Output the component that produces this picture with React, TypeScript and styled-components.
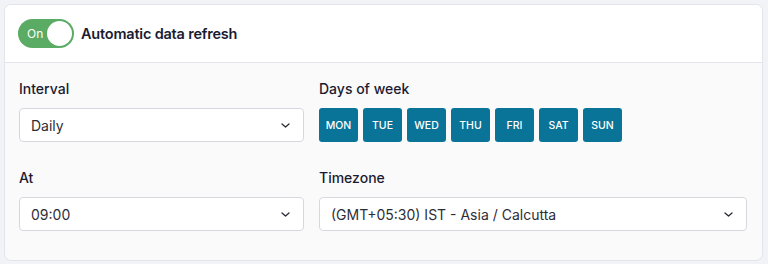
import { FC, useState } from "react";
import styled, { createGlobalStyle } from "styled-components";

const GlobalStyle = createGlobalStyle`
  html, body {
    margin: 0;
    padding: 0;
    background: #f2f3f7;
    font-family: Inter, "Noto Sans", sans-serif;
    color: #1b1b32;
  }
`;

const Page = styled.div`
  padding: 4px 5px 5px 4px;
`;

const Card = styled.section`
  background: #fafafb;
  border: 1px solid #e3e5ec;
  border-radius: 7px;
  overflow: hidden;
`;

const Header = styled.div`
  display: flex;
  align-items: center;
  gap: 7px;
  height: 57px;
  padding: 0 14px 0 13px;
  background: #fff;
  border-bottom: 1px solid #e3e5ec;
`;

const Title = styled.h3`
  margin: 0;
  font-size: 14.5px;
  font-weight: 600;
  letter-spacing: -0.2px;
`;

const Toggle = styled.button<{ $on: boolean }>`
  position: relative;
  width: 56px;
  height: 29px;
  border: none;
  border-radius: 15px;
  padding: 0 0 0 9px;
  background: ${(p) => (p.$on ? "#5aab63" : "#c4c7cf")};
  color: #fff;
  font-family: inherit;
  font-size: 12px;
  text-align: left;
  cursor: pointer;

  &::after {
    content: "";
    position: absolute;
    top: 2px;
    left: ${(p) => (p.$on ? "29px" : "2px")};
    width: 25px;
    height: 25px;
    border-radius: 50%;
    background: #fff;
  }
`;

const Body = styled.div`
  display: grid;
  grid-template-columns: 285px 1fr;
  column-gap: 15px;
  row-gap: 26px;
  padding: 16px 15px 29px 14px;
`;

const Field = styled.div`
  display: flex;
  flex-direction: column;
  gap: 9px;
`;

const Label = styled.label`
  font-size: 14px;
  font-weight: 500;
  line-height: 20px;
`;

const SelectBox = styled.div`
  display: flex;
  align-items: center;
  justify-content: space-between;
  height: 32px;
  padding: 0 13px 0 11px;
  background: #fff;
  border: 1px solid #d6d8de;
  border-radius: 4px;
  font-size: 14px;
  color: #2e2e38;
`;

const Days = styled.div`
  display: flex;
  gap: 5px;
`;

const Day = styled.button<{ $active: boolean }>`
  width: 39px;
  height: 34px;
  padding: 0;
  border: none;
  border-radius: 3px;
  background: ${(p) => (p.$active ? "#0a7398" : "#e6e8ee")};
  color: ${(p) => (p.$active ? "#fff" : "#444")};
  font-family: inherit;
  font-size: 10.5px;
  font-weight: 500;
  cursor: pointer;
`;

const Chevron: FC = () => (
  <svg width="9" height="5" viewBox="0 0 9 5" fill="none">
    <path d="M1 1l3.5 3 3.5-3" stroke="#2b2b35" strokeWidth="1.3" strokeLinecap="round" strokeLinejoin="round" />
  </svg>
);

const Select: FC<{ value: string }> = ({ value }) => (
  <SelectBox>
    <span>{value}</span>
    <Chevron />
  </SelectBox>
);

const days = ["MON", "TUE", "WED", "THU", "FRI", "SAT", "SUN"];

export default function App() {
  const [on, setOn] = useState(true);
  return (
    <>
      <GlobalStyle />
      <Page>
        <Card>
          <Header>
            <Toggle $on={on} onClick={() => setOn(!on)}>
              On
            </Toggle>
            <Title>Automatic data refresh</Title>
          </Header>
          <Body>
            <Field>
              <Label>Interval</Label>
              <Select value="Daily" />
            </Field>
            <Field>
              <Label>Days of week</Label>
              <Days>
                {days.map((d) => (
                  <Day key={d} $active>
                    {d}
                  </Day>
                ))}
              </Days>
            </Field>
            <Field>
              <Label>At</Label>
              <Select value="09:00" />
            </Field>
            <Field>
              <Label>Timezone</Label>
              <Select value="(GMT+05:30) IST - Asia / Calcutta" />
            </Field>
          </Body>
        </Card>
      </Page>
    </>
  );
}
